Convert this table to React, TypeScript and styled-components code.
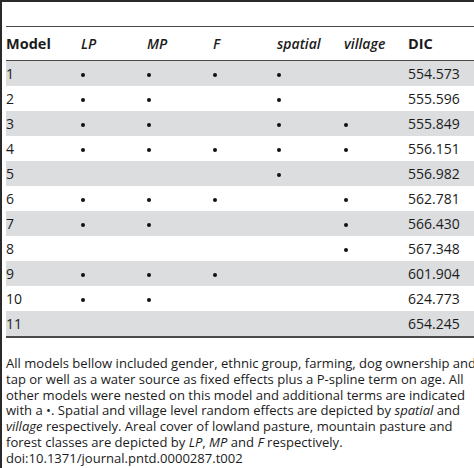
import React from 'react';
import styled, { createGlobalStyle } from 'styled-components';

const GlobalStyle = createGlobalStyle`
  html, body {
    margin: 0;
    padding: 0;
    background: #fff;
  }
  body {
    width: 474px;
    height: 468px;
    overflow: hidden;
    font-family: "Open Sans", "Noto Sans", sans-serif;
    color: #1b1b1b;
  }
`;

const Frame = styled.div`
  height: 468px;
  box-sizing: border-box;
  border-top: 2px solid #2a2a2a;
  border-left: 2px solid #2a2a2a;
  padding-left: 4px;
  padding-top: 24px;
  overflow: hidden;
`;

const Table = styled.div`
  width: 480px;
  border-top: 1.5px solid #4a4a4a;
  border-bottom: 2px solid #4a4a4a;
`;

const COLS = '75px 66px 66px 64px 67px 64px 1fr';

const HeaderRow = styled.div`
  display: grid;
  grid-template-columns: ${COLS};
  align-items: center;
  height: 33px;
  border-bottom: 1.5px solid #4a4a4a;
`;

const HeadCell = styled.div<{ $var?: boolean }>`
  font-style: ${(p) => (p.$var ? 'italic' : 'normal')};
  font-weight: ${(p) => (p.$var ? 600 : 700)};
  font-size: ${(p) => (p.$var ? '14px' : '14.5px')};
`;

const Row = styled.div<{ $shaded: boolean }>`
  display: grid;
  grid-template-columns: ${COLS};
  align-items: center;
  height: 25px;
  background: ${(p) => (p.$shaded ? '#dcdddf' : '#fff')};
  font-size: 14px;
`;

const Cell = styled.div``;

const Dot = styled.span`
  display: inline-block;
  width: 4px;
  height: 4px;
  border-radius: 50%;
  background: #111;
  vertical-align: middle;
`;

const Caption = styled.p`
  margin: 18px 0 0;
  font-size: 13.05px;
  line-height: 15.8px;
  white-space: nowrap;
`;

type ModelRow = {
  id: number;
  terms: boolean[];
  dic: string;
};

const rows: ModelRow[] = [
  { id: 1, terms: [true, true, true, true, false], dic: '554.573' },
  { id: 2, terms: [true, true, false, true, false], dic: '555.596' },
  { id: 3, terms: [true, true, false, true, true], dic: '555.849' },
  { id: 4, terms: [true, true, true, true, true], dic: '556.151' },
  { id: 5, terms: [false, false, false, true, false], dic: '556.982' },
  { id: 6, terms: [true, true, true, false, true], dic: '562.781' },
  { id: 7, terms: [true, true, false, false, true], dic: '566.430' },
  { id: 8, terms: [false, false, false, false, true], dic: '567.348' },
  { id: 9, terms: [true, true, true, false, false], dic: '601.904' },
  { id: 10, terms: [true, true, false, false, false], dic: '624.773' },
  { id: 11, terms: [false, false, false, false, false], dic: '654.245' },
];

const vars = ['LP', 'MP', 'F', 'spatial', 'village'];

export default function App() {
  return (
    <>
      <GlobalStyle />
      <Frame>
        <Table>
          <HeaderRow>
            <HeadCell>Model</HeadCell>
            {vars.map((v) => (
              <HeadCell key={v} $var>
                {v}
              </HeadCell>
            ))}
            <HeadCell>DIC</HeadCell>
          </HeaderRow>
          {rows.map((r, i) => (
            <Row key={r.id} $shaded={i % 2 === 0}>
              <Cell>{r.id}</Cell>
              {r.terms.map((t, j) => (
                <Cell key={j}>{t && <Dot />}</Cell>
              ))}
              <Cell>{r.dic}</Cell>
            </Row>
          ))}
        </Table>
        <Caption>
          All models bellow included gender, ethnic group, farming, dog ownership and
          <br />
          tap or well as a water source as fixed effects plus a P-spline term on age. All
          <br />
          other models were nested on this model and additional terms are indicated
          <br />
          with a •. Spatial and village level random effects are depicted by <i>spatial</i> and
          <br />
          <i>village</i> respectively. Areal cover of lowland pasture, mountain pasture and
          <br />
          forest classes are depicted by <i>LP</i>, <i>MP</i> and <i>F</i> respectively.
          <br />
          doi:10.1371/journal.pntd.0000287.t002
        </Caption>
      </Frame>
    </>
  );
}
